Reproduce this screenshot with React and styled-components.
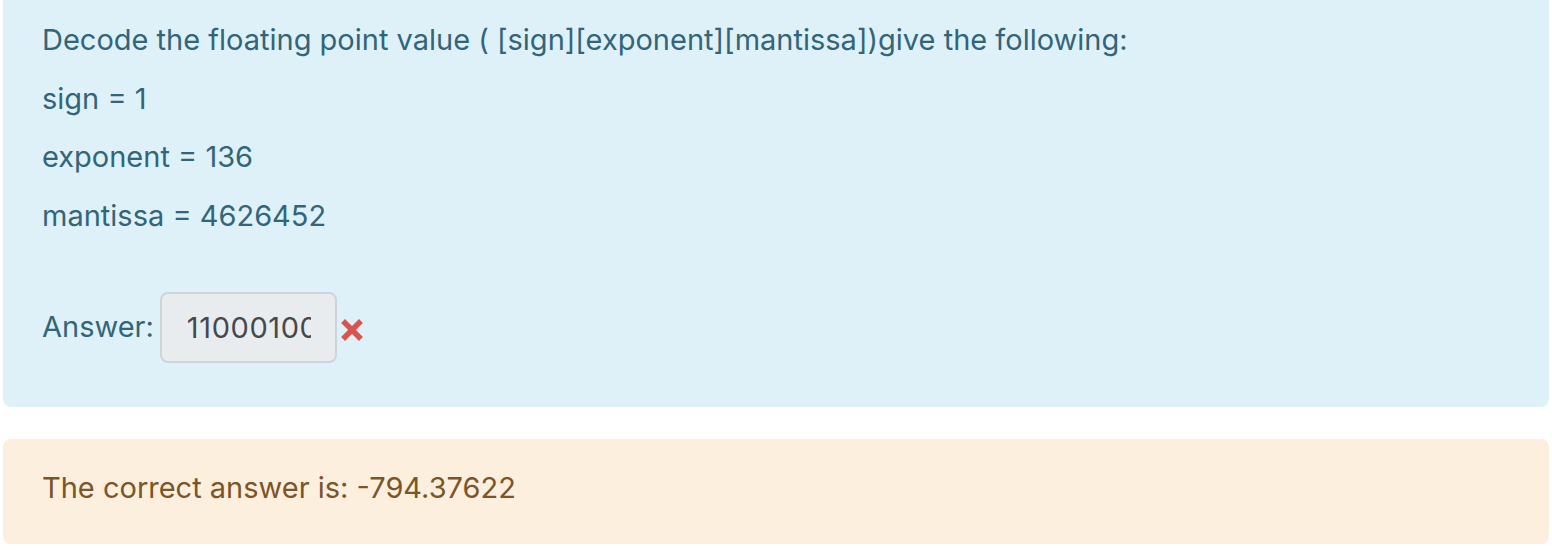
import styled, { createGlobalStyle } from 'styled-components';

const GlobalStyle = createGlobalStyle`
  body {
    margin: 0;
    background: #ffffff;
    font-family: Inter, "Liberation Sans", Arial, sans-serif;
  }
`;

const Page = styled.div`
  display: flex;
  flex-direction: column;
  gap: 32px;
  padding: 0 3px;
  margin-top: -12px;
`;

const Alert = styled.div`
  border-radius: 8px;
  padding: ${(p) => p.$padding};
  background-color: ${(p) => (p.$kind === 'warning' ? '#fcefdd' : '#dff1f8')};
  color: ${(p) => (p.$kind === 'warning' ? '#7b5427' : '#31657a')};
  font-size: 29px;
  line-height: 40px;
`;

const Line = styled.p`
  margin: 0 0 18.5px;
`;

const AnswerRow = styled.div`
  display: flex;
  align-items: center;
  gap: 6px;
  margin-top: 56px;
`;

const AnswerInput = styled.input`
  box-sizing: border-box;
  width: 177px;
  height: 71px;
  padding: 0 24px 0 25px;
  border: 2px solid #cfd4d9;
  border-radius: 8px;
  background-color: #e8ecef;
  color: #45494c;
  font-family: inherit;
  font-size: 29px;
  letter-spacing: 0.6px;
  outline: none;
`;

const WrongMark = styled.svg`
  width: 22px;
  height: 22px;
  margin-left: -2px;
  margin-top: 6px;
  flex: none;
`;

export default function App() {
  return (
    <>
      <GlobalStyle />
      <Page>
        <Alert $kind="info" $padding="32px 40px 44px 39px">
          <Line>Decode the floating point value ( [sign][exponent][mantissa])give the following:</Line>
          <Line>sign = 1</Line>
          <Line>exponent = 136</Line>
          <Line>mantissa = 4626452</Line>
          <AnswerRow>
            Answer:
            <AnswerInput readOnly value="11000100010001101001100000010100" />
            <WrongMark viewBox="0 0 22 22">
              <path d="M4 4 L18 18 M18 4 L4 18" stroke="#d9534f" strokeWidth="5.5" strokeLinecap="square" />
            </WrongMark>
          </AnswerRow>
        </Alert>
        <Alert $kind="warning" $padding="29px 40px 36px 39px">
          The correct answer is: -794.37622
        </Alert>
      </Page>
    </>
  );
}
